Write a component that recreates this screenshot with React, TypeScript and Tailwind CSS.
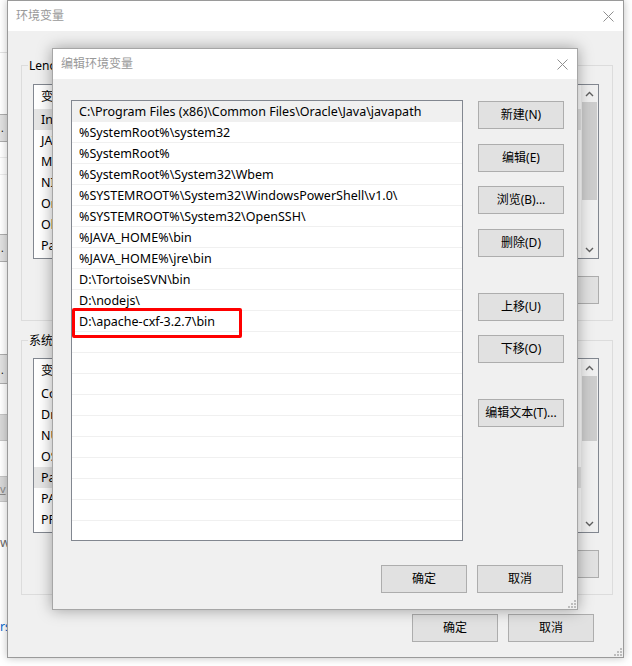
import type { ReactNode } from 'react'

const pathEntries = [
  'C:\\Program Files (x86)\\Common Files\\Oracle\\Java\\javapath',
  '%SystemRoot%\\system32',
  '%SystemRoot%',
  '%SystemRoot%\\System32\\Wbem',
  '%SYSTEMROOT%\\System32\\WindowsPowerShell\\v1.0\\',
  '%SYSTEMROOT%\\System32\\OpenSSH\\',
  '%JAVA_HOME%\\bin',
  '%JAVA_HOME%\\jre\\bin',
  'D:\\TortoiseSVN\\bin',
  'D:\\nodejs\\',
  'D:\\apache-cxf-3.2.7\\bin',
]

const userVars = ['IntelliJ IDEA', 'JAVA_HOME', 'MAVEN_HOME', 'NINJA_HOME', 'OneDrive', 'OldPath', 'Path']
const sysVars = ['ComSpec', 'DriverData', 'NUMBER_OF_PROCESSORS', 'OS', 'Path', 'PATHEXT', 'PROCESSOR_ARCHITECTURE']

function Btn({ children, className = '' }: { children: ReactNode; className?: string }) {
  return (
    <div className={`flex h-[28px] shrink-0 items-center justify-center border border-[#adadad] bg-[#e1e1e1] text-[12px] text-black ${className}`}>
      {children}
    </div>
  )
}

function CloseX() {
  return (
    <svg width="11" height="11" viewBox="0 0 11 11">
      <path d="M0.5 0.5L10.5 10.5M10.5 0.5L0.5 10.5" stroke="#8f8f8f" strokeWidth="1" />
    </svg>
  )
}

function Grip() {
  return (
    <svg width="9" height="9" viewBox="0 0 9 9" fill="#bdbdbd">
      <rect x="7" y="1" width="2" height="2" />
      <rect x="4" y="4" width="2" height="2" />
      <rect x="7" y="4" width="2" height="2" />
      <rect x="1" y="7" width="2" height="2" />
      <rect x="4" y="7" width="2" height="2" />
      <rect x="7" y="7" width="2" height="2" />
    </svg>
  )
}

function Chevron({ up }: { up?: boolean }) {
  return (
    <svg width="9" height="6" viewBox="0 0 9 6">
      <path d={up ? 'M1 5L4.5 1.5L8 5' : 'M1 1L4.5 4.5L8 1'} stroke="#606060" strokeWidth="1.4" fill="none" />
    </svg>
  )
}

function BackList({ rows, selected, thumbClass }: { rows: string[]; selected: number; thumbClass: string }) {
  return (
    <div className="ml-[11px] flex h-[175px] w-[566px] border border-[#828790] bg-white">
      <div className="flex-1 overflow-hidden text-[12.5px]">
        <div className="flex h-[24px] items-center pl-[7px] pt-[1px]">变量</div>
        {rows.map((r, i) => (
          <div key={r} className={`flex h-[21px] items-center pl-[7px] pt-[2px] whitespace-nowrap ${i === selected ? 'bg-[#e5e5e5]' : ''}`}>
            {r}
          </div>
        ))}
      </div>
      <div className="flex w-[17px] flex-col bg-[#f0f0f0]">
        <div className="flex h-[17px] items-center justify-center"><Chevron up /></div>
        <div className={`mx-[1px] bg-[#cdcdcd] ${thumbClass}`} />
        <div className="flex-1" />
        <div className="flex h-[17px] items-center justify-center"><Chevron /></div>
      </div>
    </div>
  )
}

function GroupBox({ label, children, className = '' }: { label: string; children: ReactNode; className?: string }) {
  return (
    <div className={`relative ml-[13px] w-[592px] border border-[#dcdcdc] ${className}`}>
      <span className="absolute -top-[9px] left-[6px] bg-[#f0f0f0] px-[1px] leading-[17px]">{label}</span>
      {children}
    </div>
  )
}

export default function App() {
  return (
    <div className="relative h-[666px] w-[632px] overflow-hidden bg-white font-['Noto_Sans','Noto_Sans_CJK_SC',sans-serif] text-[12px] text-black">
      {/* window behind, left strip */}
      <div className="flex h-full w-[8px] flex-col bg-white">
        <div className="h-[53px] border-b border-[#e3e3e3]" />
        <div className="mt-[61px] flex h-[28px] items-end border-y border-[#adadad] bg-[#e1e1e1] pb-[8px] pl-[1px] text-[10px] leading-none">.</div>
        <div className="mt-[15px] h-[18px] border-y border-[#ececec]" />
        <div className="mt-[59px] flex h-[28px] items-end border-y border-[#adadad] bg-[#e1e1e1] pb-[8px] pl-[1px] text-[10px] leading-none">.</div>
        <div className="mt-[92px] flex h-[30px] items-end border-y border-[#adadad] bg-[#e1e1e1] pb-[8px] pl-[1px] text-[10px] leading-none">.</div>
        <div className="mt-[30px] h-[27px] border-y border-[#c4c4c4] bg-[#d8d8d8]" />
        <div className="mt-[35px] h-[26px] border-y border-[#c4c4c4] bg-[#d8d8d8] text-[11px] leading-[24px] text-[#8a8a8a] underline">v</div>
        <div className="mt-[34px] text-[13px] leading-none text-[#6d6d6d]">w</div>
        <div className="mt-[72px] text-[12px] leading-none text-[#0066cc]">rs</div>
      </div>

      {/* 环境变量 */}
      <div className="absolute left-[7px] top-0 flex h-[658px] w-[617px] flex-col border border-[#9a9a9a] bg-[#f0f0f0] shadow-[0_0_8px_rgba(0,0,0,0.25)]">
        <div className="flex h-[30px] items-center justify-between bg-white pl-[8px] pr-[9px] text-[#999999]">
          <span>环境变量</span>
          <CloseX />
        </div>
        <GroupBox label="Lenovo 的用户变量" className="mt-[34px] h-[256px]">
          <div className="pt-[18px]">
            <BackList rows={userVars} selected={0} thumbClass="h-[98px]" />
            <div className="mt-[17px] flex justify-end gap-[10px] pr-[13px]">
              <Btn className="w-[86px]">新建(N)...</Btn>
              <Btn className="w-[86px]">编辑(E)...</Btn>
              <Btn className="w-[86px]">删除(D)</Btn>
            </div>
          </div>
        </GroupBox>
        <GroupBox label="系统变量" className="mt-[19px] h-[255px]">
          <div className="pt-[17px]">
            <BackList rows={sysVars} selected={4} thumbClass="h-[65px]" />
            <div className="mt-[17px] flex justify-end gap-[10px] pr-[13px]">
              <Btn className="w-[86px]">新建(W)...</Btn>
              <Btn className="w-[86px]">编辑(I)...</Btn>
              <Btn className="w-[86px]">删除(L)</Btn>
            </div>
          </div>
        </GroupBox>
        <div className="mt-[19px] flex justify-end gap-[10px] pr-[29px]">
          <Btn className="w-[86px]">确定</Btn>
          <Btn className="w-[86px]">取消</Btn>
        </div>
        <div className="absolute bottom-[1px] right-[1px]"><Grip /></div>
      </div>

      {/* 编辑环境变量 */}
      <div className="absolute left-[52px] top-[48px] flex h-[562px] w-[526px] flex-col border border-[#a6a6a6] bg-[#f0f0f0] shadow-[0_0_14px_rgba(0,0,0,0.35)]">
        <div className="flex h-[30px] items-center justify-between bg-white pl-[8px] pr-[9px] text-[#999999]">
          <span>编辑环境变量</span>
          <CloseX />
        </div>
        <div className="flex pl-[18px] pt-[21px]">
          <div className="relative h-[441px] w-[392px] overflow-hidden border border-[#828790] bg-white text-[12.5px]">
            {pathEntries.map((p, i) => (
              <div
                key={p}
                className={`flex h-[21px] items-center border-b border-[#f0f0f0] pl-[7px] pt-[2px] whitespace-nowrap ${i === 0 ? 'bg-[#f0f0f0]' : ''}`}
              >
                {p}
              </div>
            ))}
            {Array.from({ length: 10 }).map((_, i) => (
              <div key={i} className="h-[21px] border-b border-[#f0f0f0]" />
            ))}
            {/* red annotation box */}
            <div className="absolute left-0 top-[207px] h-[30px] w-[170px] rounded-[2px] border-[3px] border-[#ff0000]" />
          </div>
          <div className="ml-[15px] flex w-[86px] flex-col">
            <Btn className="mt-[1px]">新建(N)</Btn>
            <Btn className="mt-[15px]">编辑(E)</Btn>
            <Btn className="mt-[14px]">浏览(B)...</Btn>
            <Btn className="mt-[15px]">删除(D)</Btn>
            <Btn className="mt-[36px]">上移(U)</Btn>
            <Btn className="mt-[14px]">下移(O)</Btn>
            <Btn className="mt-[36px]">编辑文本(T)...</Btn>
          </div>
        </div>
        <div className="mt-[24px] flex justify-end gap-[10px] pr-[14px]">
          <Btn className="w-[86px]">确定</Btn>
          <Btn className="w-[86px]">取消</Btn>
        </div>
        <div className="absolute bottom-[1px] right-[1px]"><Grip /></div>
      </div>
    </div>
  )
}
